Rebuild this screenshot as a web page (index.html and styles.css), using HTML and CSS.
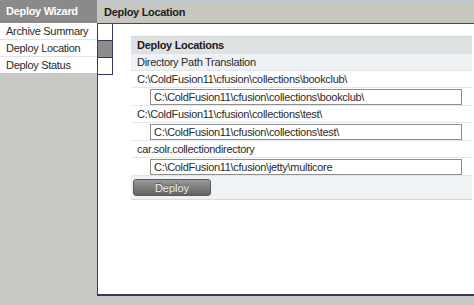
FILE: index.html
```html
<!DOCTYPE html>
<html>
<head>
    <title>Deploy Wizard</title>
    <link rel="stylesheet" href="styles.css">
</head>
<body>
    <div class="wizard">
        <div class="sidebar">
            <div class="sidebar-head">Deploy Wizard</div>
            <ul class="steps">
                <li>Archive Summary</li>
                <li>Deploy Location</li>
                <li>Deploy Status</li>
            </ul>
        </div>
        <div class="main">
            <div class="main-head">Deploy Location</div>
            <div class="panel">
                <div class="tabs">
                    <div class="tab"></div>
                    <div class="tab active"></div>
                    <div class="tab"></div>
                </div>
                <div class="locations">
                    <div class="sec-head">Deploy Locations</div>
                    <div class="sub-head">Directory Path Translation</div>

                    <div class="label-row">C:\ColdFusion11\cfusion\collections\bookclub\</div>
                    <div class="input-row"><input type="text" value="C:\ColdFusion11\cfusion\collections\bookclub\"></div>

                    <div class="label-row">C:\ColdFusion11\cfusion\collections\test\</div>
                    <div class="input-row"><input type="text" value="C:\ColdFusion11\cfusion\collections\test\"></div>

                    <div class="label-row">car.solr.collectiondirectory</div>
                    <div class="input-row"><input type="text" value="C:\ColdFusion11\cfusion\jetty\multicore"></div>

                    <div class="btn-row">
                        <button class="deploy">Deploy</button>
                    </div>
                </div>
            </div>
        </div>
    </div>
</body>
</html>
```

FILE: styles.css
```css
body {
    margin: 0;
    font-family: "Liberation Sans", Arial, sans-serif;
    font-size: 11px;
    letter-spacing: -0.3px;
    color: #2a2a2a;
    background-color: #c8c8c4;
}
.wizard {
    display: flex;
    height: 305px;
}
.sidebar {
    width: 97px;
    flex-shrink: 0;
}
.sidebar-head {
    height: 23px;
    line-height: 23px;
    padding-left: 6px;
    background-color: #8a8a8a;
    color: #fff;
    font-weight: bold;
    white-space: nowrap;
}
.steps {
    list-style: none;
    margin: 0;
    padding: 0;
    background-color: #fff;
}
.steps li {
    height: 16px;
    line-height: 16px;
    padding-left: 6px;
    white-space: nowrap;
    border-bottom: 1px solid #e2e2e2;
}
.steps li:last-child {
    border-bottom: none;
}
.main {
    flex: 1;
    display: flex;
    flex-direction: column;
}
.main-head {
    height: 23px;
    line-height: 23px;
    padding-left: 7px;
    background-color: #c8c6c1;
    border-top: 1px solid #b9c6d3;
    box-sizing: border-box;
    font-weight: bold;
    color: #1e1e1e;
}
.panel {
    display: flex;
    align-items: flex-start;
    height: 273px;
    box-sizing: border-box;
    background-color: #fff;
    border-top: 1px solid #3a4668;
    border-left: 1px solid #2f3b64;
    border-bottom: 2px solid #2f3b64;
}
.tabs {
    width: 15px;
    flex-shrink: 0;
}
.tab {
    height: 16px;
    border: 1px solid #2f3b64;
    border-top: none;
    border-left: none;
    background-color: #fff;
}
.tab.active {
    background-color: #8c8c8a;
}
.locations {
    margin: 12px 2px 0 18px;
    flex: 1;
    border-bottom: 1px solid #d6dbdc;
}
.sec-head {
    height: 16px;
    line-height: 16px;
    padding-left: 6px;
    background-color: #dfe2e2;
    border-top: 1px solid #d2d6d6;
    font-weight: bold;
    color: #1a1a1a;
}
.sub-head {
    height: 16px;
    line-height: 16px;
    padding-left: 6px;
    background-color: #eef2f4;
    border-top: 1px solid #dde2e4;
}
.label-row {
    height: 16px;
    line-height: 16px;
    padding-left: 6px;
    border-top: 1px solid #e3e6e6;
}
.input-row {
    height: 17px;
    padding-left: 19px;
    border-top: 1px solid #e3e6e6;
    display: flex;
    align-items: center;
}
.input-row input {
    width: 312px;
    height: 16px;
    box-sizing: border-box;
    margin: 0;
    padding: 0 3px;
    border: 1px solid #8e8e8e;
    font-family: "Liberation Sans", Arial, sans-serif;
    font-size: 11px;
    letter-spacing: -0.3px;
    color: #2a2a2a;
}
.btn-row {
    padding: 3px 2px;
    background-color: #eff3f5;
    border-top: 1px solid #e3e6e6;
}
.deploy {
    width: 78px;
    height: 17px;
    padding: 0;
    border: 1px solid #5a5a5a;
    border-radius: 3px;
    background: linear-gradient(#9a9a9a, #626262);
    color: #f0f0f0;
    font-family: "Liberation Sans", Arial, sans-serif;
    font-size: 11px;
    text-shadow: 0 -1px 0 #555;
    cursor: pointer;
}
```
